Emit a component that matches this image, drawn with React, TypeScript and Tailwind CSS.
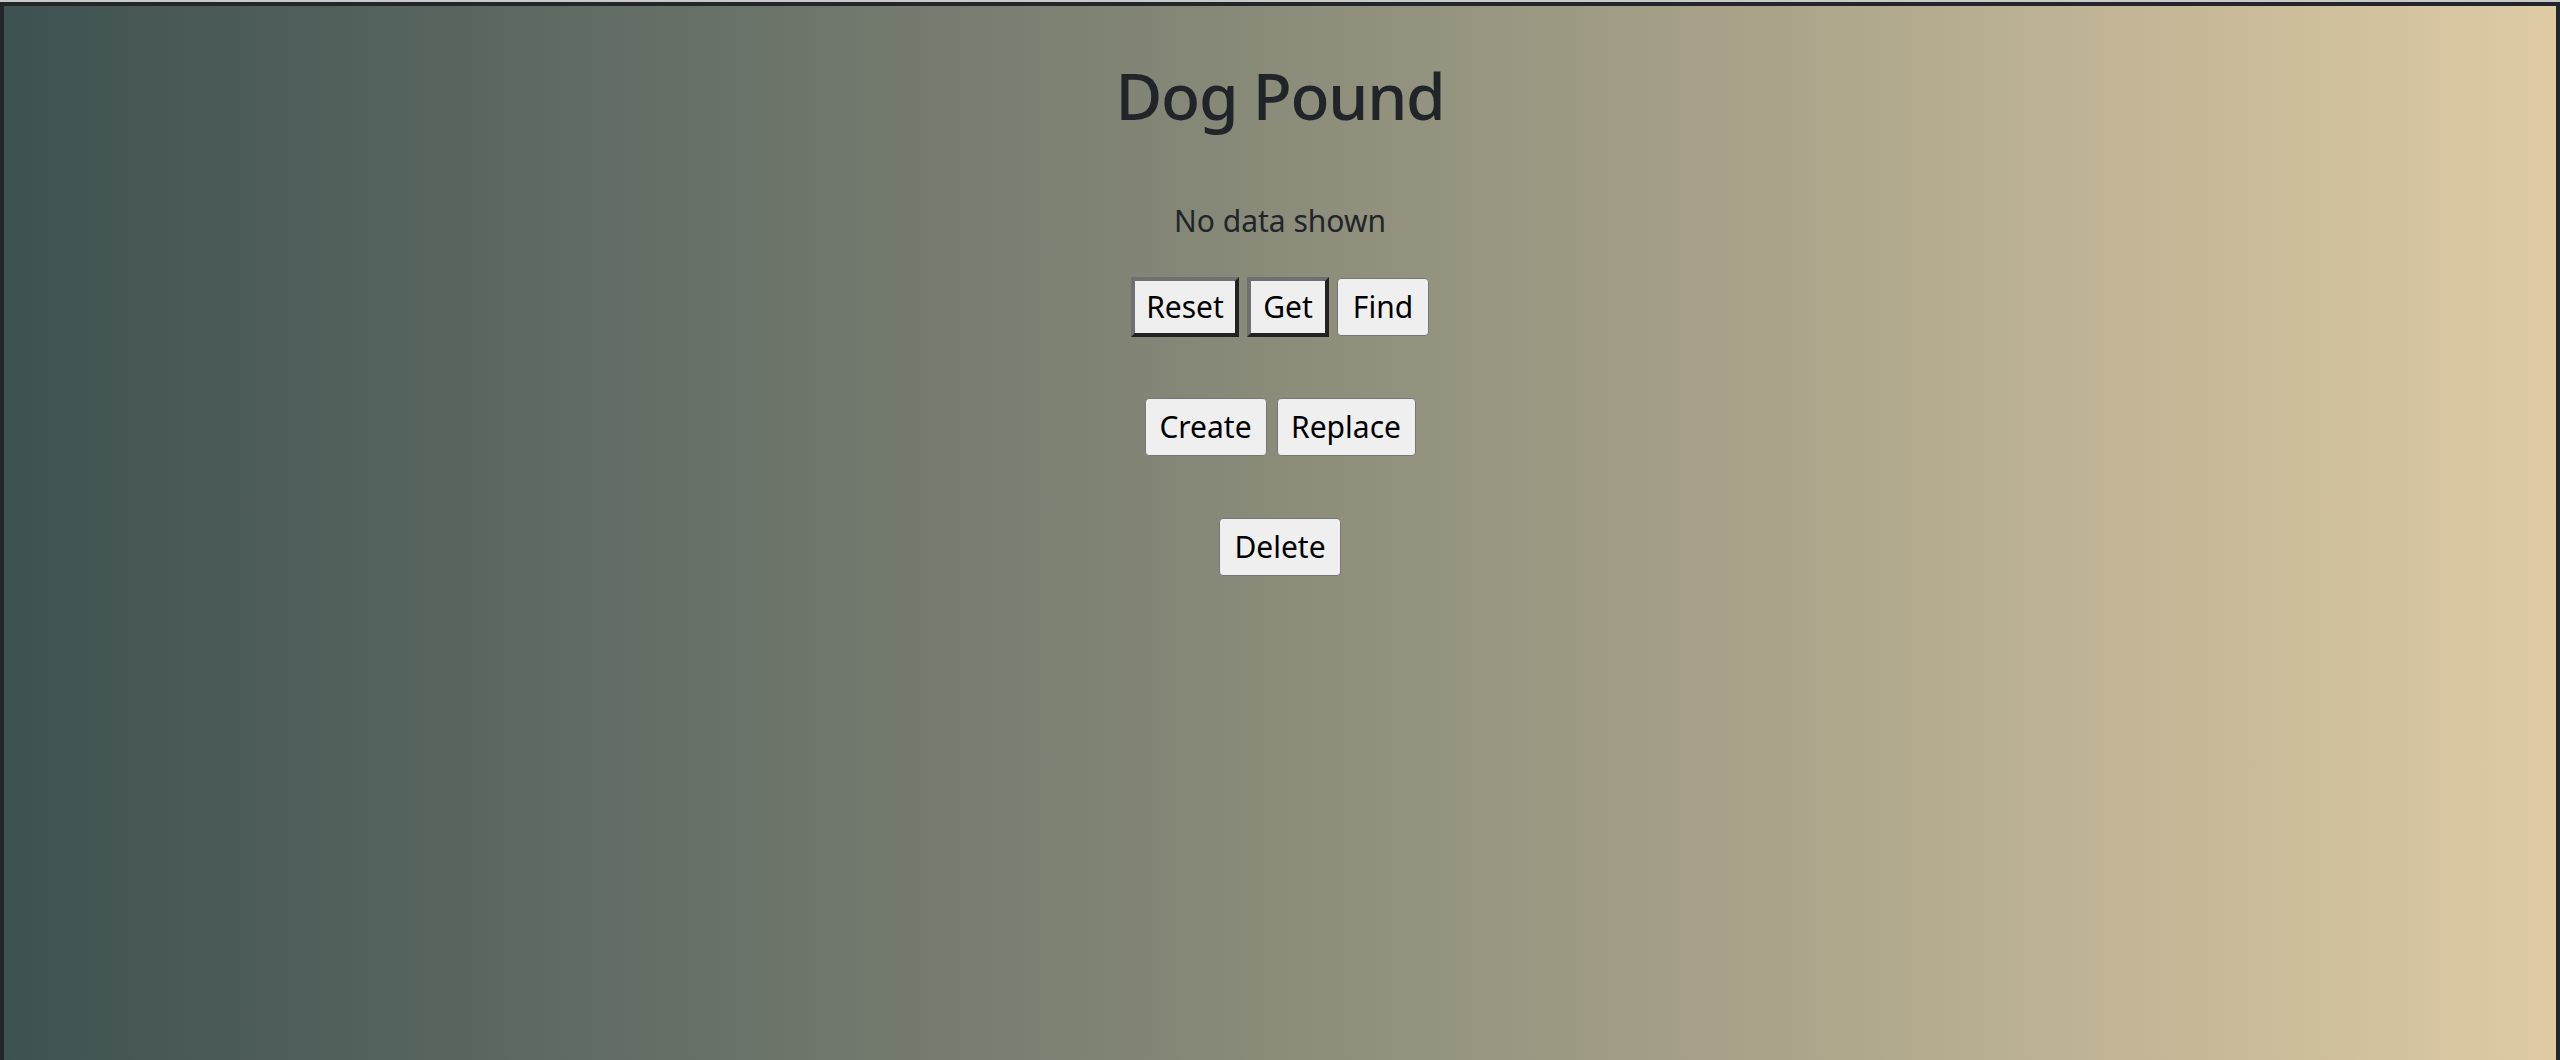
import React from "react";

const font = { fontFamily: '"Noto Sans", "Open Sans", sans-serif' };

function Btn({ label, w, pressed }: { label: string; w: string; pressed?: boolean }) {
  const base =
    "flex items-center justify-center bg-[#efefef] text-black text-[30px] leading-[36px] " + w;
  const cls = pressed
    ? base + " h-[60px] border-[4px] border-t-[#707070] border-l-[#707070] border-b-[#222222] border-r-[#222222]"
    : base + " h-[58px] border border-[#767676] rounded-[4px]";
  return (
    <button className={cls} style={font}>
      {label}
    </button>
  );
}

export default function App() {
  return (
    <div className="w-full bg-[#c9c9c9] pt-[2px]" style={font}>
      <div className="min-h-[1100px] border-4 border-b-0 border-[#22262a] bg-gradient-to-r from-[#3e5151] to-[#decba4] text-center text-[#212529]">
        <h1 className="pt-[51px] text-[64px] leading-[77px] font-medium tracking-[-0.02em]">Dog Pound</h1>
        <p className="mt-[69px] text-[30px] leading-[36px]">No data shown</p>
        <div className="mt-[38px] flex items-center justify-center gap-[8px]">
          <Btn label="Reset" w="w-[108px]" pressed />
          <Btn label="Get" w="w-[82px]" pressed />
          <Btn label="Find" w="w-[92px]" />
        </div>
        <div className="mt-[61px] flex items-center justify-center gap-[10px]">
          <Btn label="Create" w="w-[122px]" />
          <Btn label="Replace" w="w-[139px]" />
        </div>
        <div className="mt-[62px] flex items-center justify-center">
          <Btn label="Delete" w="w-[122px]" />
        </div>
      </div>
    </div>
  );
}
